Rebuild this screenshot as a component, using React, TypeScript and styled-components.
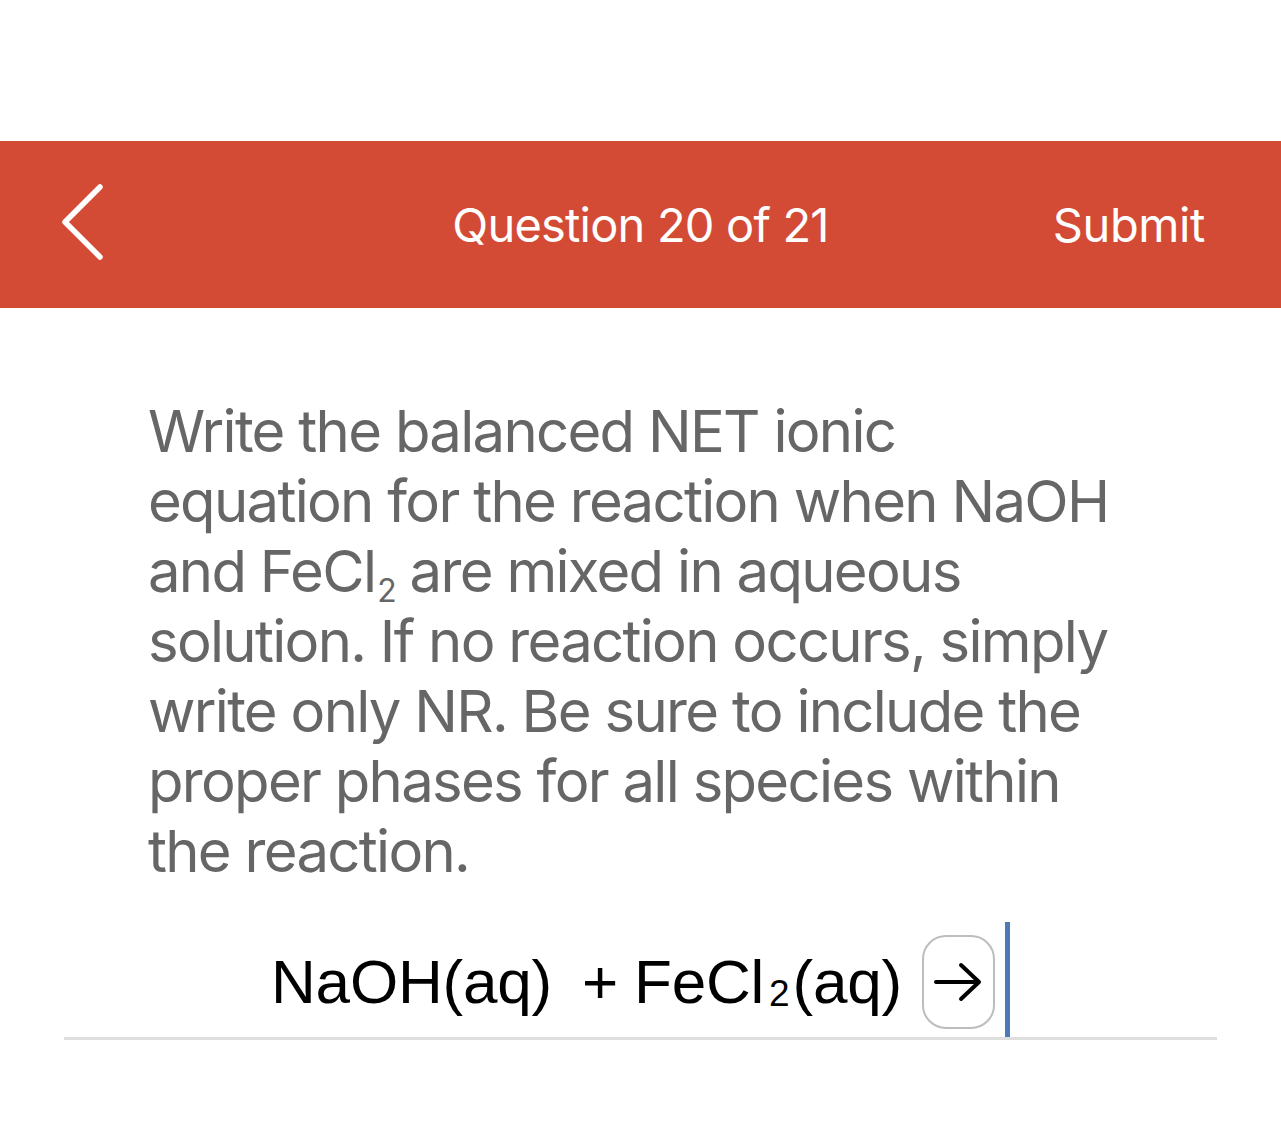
import React from "react";
import styled, { createGlobalStyle } from "styled-components";

const Global = createGlobalStyle`
  html, body { margin: 0; padding: 0; background: #ffffff; }
  body { font-family: Inter, "Noto Sans", sans-serif; }
`;

const Page = styled.div`
  width: 1281px;
  min-height: 1132px;
  background: #fff;
  padding-top: 141px;
  box-sizing: border-box;
`;

const Header = styled.header`
  height: 167px;
  background: #d44b35;
  display: grid;
  grid-template-columns: 1fr auto 1fr;
  align-items: center;
  padding: 0 76px;
  box-sizing: border-box;
  color: #fff;
`;

const BackButton = styled.button`
  justify-self: start;
  margin-left: -17px;
  background: none;
  border: none;
  padding: 0 0 6px 0;
  width: 48px;
  height: 86px;
  display: flex;
  align-items: center;
  cursor: pointer;
`;

const Title = styled.h1`
  margin: 0;
  font-family: Inter, sans-serif;
  font-weight: 400;
  font-size: 47px;
  letter-spacing: -0.8px;
  color: #fff;
`;

const SubmitButton = styled.button`
  justify-self: end;
  background: none;
  border: none;
  padding: 0;
  font-family: Inter, sans-serif;
  font-size: 47px;
  font-weight: 400;
  letter-spacing: -0.4px;
  color: #fff;
  cursor: pointer;
`;

const Body = styled.main`
  padding: 88px 148px 0 148px;
`;

const Prompt = styled.p`
  margin: 0;
  font-family: Inter, sans-serif;
  font-size: 58px;
  line-height: 70px;
  color: #666666;
  letter-spacing: -1.7px;
`;

const Sub = styled.span`
  display: inline-block;
  font-size: 0.55em;
  line-height: 1;
  transform: translateY(0.3em);
  margin-left: 2px;
`;

const AnswerField = styled.div`
  margin: 36px 64px 0 64px;
  border-bottom: 3px solid #dedede;
  display: flex;
  justify-content: center;
  align-items: center;
  height: 115px;
`;

const Equation = styled.div`
  display: flex;
  align-items: center;
  font-family: "Liberation Sans", Arial, sans-serif;
  font-size: 62px;
  color: #000;
  letter-spacing: -0.2px;
  padding-top: 4px;
`;

const Plus = styled.span`
  margin: 0 16px 0 30px;
`;

const EqSub = styled.span`
  font-size: 37px;
  align-self: flex-end;
  margin: 0 3px 14px 5px;
`;

const ArrowBox = styled.span`
  margin-left: 20px;
  width: 73px;
  height: 94px;
  box-sizing: border-box;
  border: 2.5px solid #bdbdbd;
  border-radius: 24px;
  display: flex;
  align-items: center;
  justify-content: center;
`;

const Caret = styled.span`
  margin-left: 10px;
  width: 5px;
  height: 115px;
  background: #4b7bb6;
  align-self: flex-end;
`;

export default function App() {
  return (
    <Page>
      <Global />
      <Header>
        <BackButton aria-label="Back">
          <svg width="46" height="78" viewBox="0 0 46 78" fill="none">
            <path d="M41 4 L6 39 L41 74" stroke="#fff" strokeWidth="5.5" strokeLinecap="round" strokeLinejoin="round" />
          </svg>
        </BackButton>
        <Title>Question 20 of 21</Title>
        <SubmitButton>Submit</SubmitButton>
      </Header>
      <Body>
        <Prompt>
          Write the balanced NET ionic equation for the reaction when NaOH and FeCl<Sub>2</Sub> are mixed in
          aqueous solution. If no reaction occurs, simply write only NR. Be sure to include the proper phases
          for all species within the reaction.
        </Prompt>
      </Body>
      <AnswerField>
        <Equation>
          <span>NaOH(aq)</span>
          <Plus>+</Plus>
          <span>FeCl</span>
          <EqSub>2</EqSub>
          <span>(aq)</span>
          <ArrowBox>
            <svg width="50" height="44" viewBox="0 0 50 44" fill="none">
              <path d="M3 22 H46 M28 5 L46 22 L28 39" stroke="#000" strokeWidth="4" strokeLinecap="round" strokeLinejoin="round" />
            </svg>
          </ArrowBox>
        </Equation>
        <Caret />
      </AnswerField>
    </Page>
  );
}
